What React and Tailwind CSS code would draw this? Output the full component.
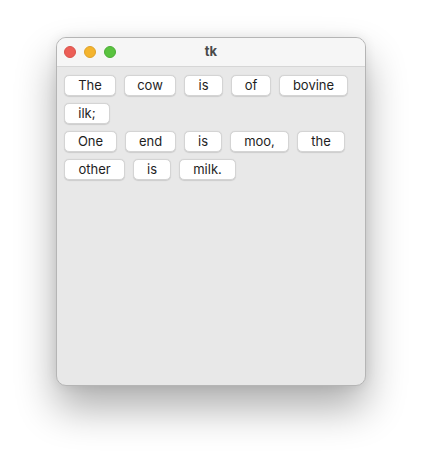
import React from "react";

const rows = [
  [["The", 52], ["cow", 52], ["is", 39], ["of", 40], ["bovine", 69]],
  [["ilk;", 46]],
  [["One", 53], ["end", 51], ["is", 38], ["moo,", 59], ["the", 48]],
  [["other", 61], ["is", 38], ["milk.", 57]],
];

function Btn({ label, w }) {
  return (
    <div
      className="h-[21px] flex items-center justify-center bg-white rounded-[5px] border border-[#d4d4d4] shadow-[0_0.5px_1px_rgba(0,0,0,0.12)] text-[13px] text-[#1e1e1e] leading-none"
      style={{ width: w }}
    >
      {label}
    </div>
  );
}

export default function App() {
  return (
    <div className="w-[422px] h-[460px] bg-white pt-[37px] pl-[56px]" style={{ fontFamily: "Inter, 'Liberation Sans', sans-serif" }}>
      <div className="w-[310px] h-[349px] rounded-[10px] overflow-hidden border border-[#b5b5b5] shadow-[0_22px_40px_rgba(0,0,0,0.32),0_0_12px_rgba(0,0,0,0.08)] flex flex-col bg-[#e8e8e8]">
        <div className="h-[29px] shrink-0 bg-[#f6f6f6] border-b border-[#d6d6d6] relative flex items-center pl-[7px] gap-[8px]">
          <div className="w-[12px] h-[12px] rounded-full bg-[#ec5f57] border border-[#d9534b]" />
          <div className="w-[12px] h-[12px] rounded-full bg-[#f4b42e] border border-[#dea22a]" />
          <div className="w-[12px] h-[12px] rounded-full bg-[#5ac33f] border border-[#4cad36]" />
          <div className="absolute inset-0 flex items-center justify-center text-[13px] font-bold text-[#4a4a4a]">tk</div>
        </div>
        <div className="flex flex-col gap-[7px] pt-[8px] pl-[7px]">
          {rows.map((r, i) => (
            <div key={i} className="flex gap-[8px]">
              {r.map(([l, w], j) => (
                <Btn key={j} label={l} w={w} />
              ))}
            </div>
          ))}
        </div>
      </div>
    </div>
  );
}
